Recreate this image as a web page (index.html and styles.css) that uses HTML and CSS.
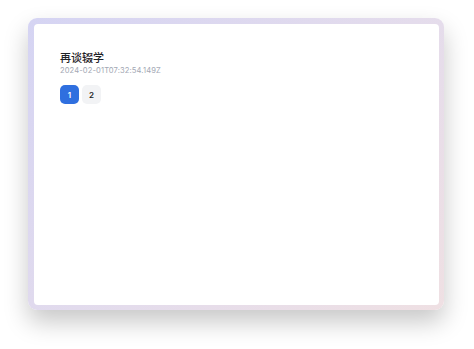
FILE: index.html
```html
<!DOCTYPE html>
<html lang="zh">
<head>
    <meta charset="UTF-8">
    <meta name="viewport" content="width=device-width, initial-scale=1.0">
    <title>再谈辍学</title>
    <link rel="stylesheet" href="styles.css">
</head>
<body>
    <div class="frame">
        <div class="card">
            <h1 class="post-title">再谈辍学</h1>
            <p class="post-date">2024-02-01T07:32:54.149Z</p>
            <div class="pager">
                <button class="page-btn active">1</button>
                <button class="page-btn">2</button>
            </div>
        </div>
    </div>
</body>
</html>
```

FILE: styles.css
```css
* {
    margin: 0;
    padding: 0;
    box-sizing: border-box;
}

body {
    background: #ffffff;
    font-family: Inter, "Noto Sans CJK SC", sans-serif;
    padding: 18px 30px 39px 28px;
    height: 349px;
    overflow: hidden;
}

.frame {
    height: 292px;
    padding: 6px 5px 5px 6px;
    border-radius: 9px;
    background: linear-gradient(135deg, #d5d4f3 0%, #e4dcec 55%, #efe0e3 100%);
    box-shadow: 0 12px 24px rgba(0, 0, 0, 0.22);
}

.card {
    height: 100%;
    background: #ffffff;
    border-radius: 4px;
    padding: 27px 26px;
}

.post-title {
    font-size: 11px;
    font-weight: 500;
    color: #1f2328;
    line-height: 14px;
}

.post-date {
    font-size: 7.6px;
    color: #a3a8b4;
    line-height: 12px;
    letter-spacing: 0.1px;
}

.pager {
    display: flex;
    gap: 3px;
    margin-top: 8px;
}

.page-btn {
    width: 19px;
    height: 19px;
    border: none;
    border-radius: 5px;
    background: #f2f3f5;
    color: #222;
    font-family: Inter, sans-serif;
    font-size: 8px;
    font-weight: 600;
}

.page-btn.active {
    background: #2f6fdf;
    color: #ffffff;
}
```
